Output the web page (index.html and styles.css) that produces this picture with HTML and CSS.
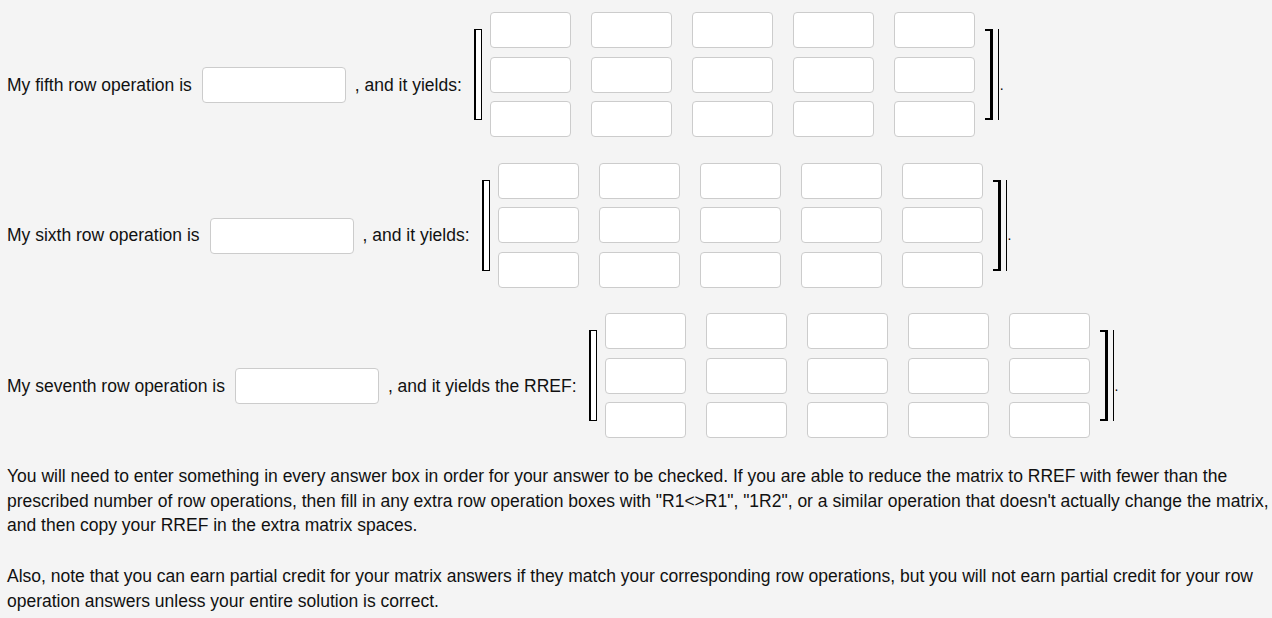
FILE: index.html
```html
<!DOCTYPE html>
<html>
<head>
<meta charset="utf-8">
<link rel="stylesheet" href="styles.css">
</head>
<body>
<div class="page">
  <div class="op-row">
    <div class="op-text">
      <span>My fifth row operation is</span>
      <input class="op-input" type="text">
      <span class="after">, and it yields:</span>
    </div>
    <div class="matrix">
      <div class="br-left"></div>
      <div class="cells">
        <input class="cell"><input class="cell"><input class="cell"><input class="cell"><input class="cell">
        <input class="cell"><input class="cell"><input class="cell"><input class="cell"><input class="cell">
        <input class="cell"><input class="cell"><input class="cell"><input class="cell"><input class="cell">
      </div>
      <div class="br-right"></div>
      <div class="br-bar"></div>
      <span class="dot">.</span>
    </div>
  </div>
  <div class="op-row">
    <div class="op-text">
      <span>My sixth row operation is</span>
      <input class="op-input" type="text">
      <span class="after">, and it yields:</span>
    </div>
    <div class="matrix">
      <div class="br-left"></div>
      <div class="cells">
        <input class="cell"><input class="cell"><input class="cell"><input class="cell"><input class="cell">
        <input class="cell"><input class="cell"><input class="cell"><input class="cell"><input class="cell">
        <input class="cell"><input class="cell"><input class="cell"><input class="cell"><input class="cell">
      </div>
      <div class="br-right"></div>
      <div class="br-bar"></div>
      <span class="dot">.</span>
    </div>
  </div>
  <div class="op-row">
    <div class="op-text">
      <span>My seventh row operation is</span>
      <input class="op-input" type="text">
      <span class="after">, and it yields the RREF:</span>
    </div>
    <div class="matrix">
      <div class="br-left"></div>
      <div class="cells">
        <input class="cell"><input class="cell"><input class="cell"><input class="cell"><input class="cell">
        <input class="cell"><input class="cell"><input class="cell"><input class="cell"><input class="cell">
        <input class="cell"><input class="cell"><input class="cell"><input class="cell"><input class="cell">
      </div>
      <div class="br-right"></div>
      <div class="br-bar"></div>
      <span class="dot">.</span>
    </div>
  </div>
  <p class="note">You will need to enter something in every answer box in order for your answer to be checked. If you are able to reduce the matrix to RREF with fewer than the prescribed number of row operations, then fill in any extra row operation boxes with "R1&lt;&gt;R1", "1R2", or a similar operation that doesn't actually change the matrix, and then copy your RREF in the extra matrix spaces.</p>
  <p class="note">Also, note that you can earn partial credit for your matrix answers if they match your corresponding row operations, but you will not earn partial credit for your row operation answers unless your entire solution is correct.</p>
</div>
</body>
</html>
```
FILE: styles.css
```css
html, body {
  margin: 0;
  padding: 0;
  background: #f4f4f4;
}
.page {
  padding: 12px 0 0 7px;
  font-family: "Liberation Sans", Arial, sans-serif;
  font-size: 17.5px;
  color: #111;
}
.op-row {
  display: flex;
  align-items: center;
  height: 125px;
  margin-bottom: 25.5px;
}
.op-text {
  display: flex;
  align-items: center;
  margin-top: 21px;
  white-space: nowrap;
}
.op-input {
  box-sizing: border-box;
  width: 144px;
  height: 36px;
  margin: 0 9px 0 10px;
  border: 1px solid #ccc;
  border-radius: 4px;
  background: #fff;
  padding: 0;
}
.after {
  margin-right: 12px;
}
.matrix {
  display: flex;
  align-items: center;
}
.br-left {
  box-sizing: border-box;
  width: 8px;
  height: 91px;
  border: 1px solid #000;
  border-left-width: 2px;
  background: #fff;
}
.cells {
  display: grid;
  grid-template-columns: repeat(5, 81px);
  grid-auto-rows: 36px;
  column-gap: 20px;
  row-gap: 8.5px;
  margin: 0 10px 0 8px;
}
.cell {
  box-sizing: border-box;
  width: 81px;
  height: 36px;
  border: 1px solid #ccc;
  border-radius: 4px;
  background: #fff;
  padding: 0;
  margin: 0;
}
.br-right {
  box-sizing: border-box;
  width: 8px;
  height: 91px;
  border: 2px solid #000;
  border-right-width: 3px;
  border-left: none;
}
.br-bar {
  width: 1px;
  height: 91px;
  background: #000;
  margin-left: 5px;
}
.dot {
  margin-left: 1px;
  margin-top: 20px;
  font-size: 14px;
  line-height: 1;
  color: #000;
}
.op-row:nth-child(3) {
  margin-bottom: 0;
}
.note {
  margin: 26px 0 0 0;
  line-height: 24.5px;
}
.note + .note {
  margin-top: 26.5px;
}
```
